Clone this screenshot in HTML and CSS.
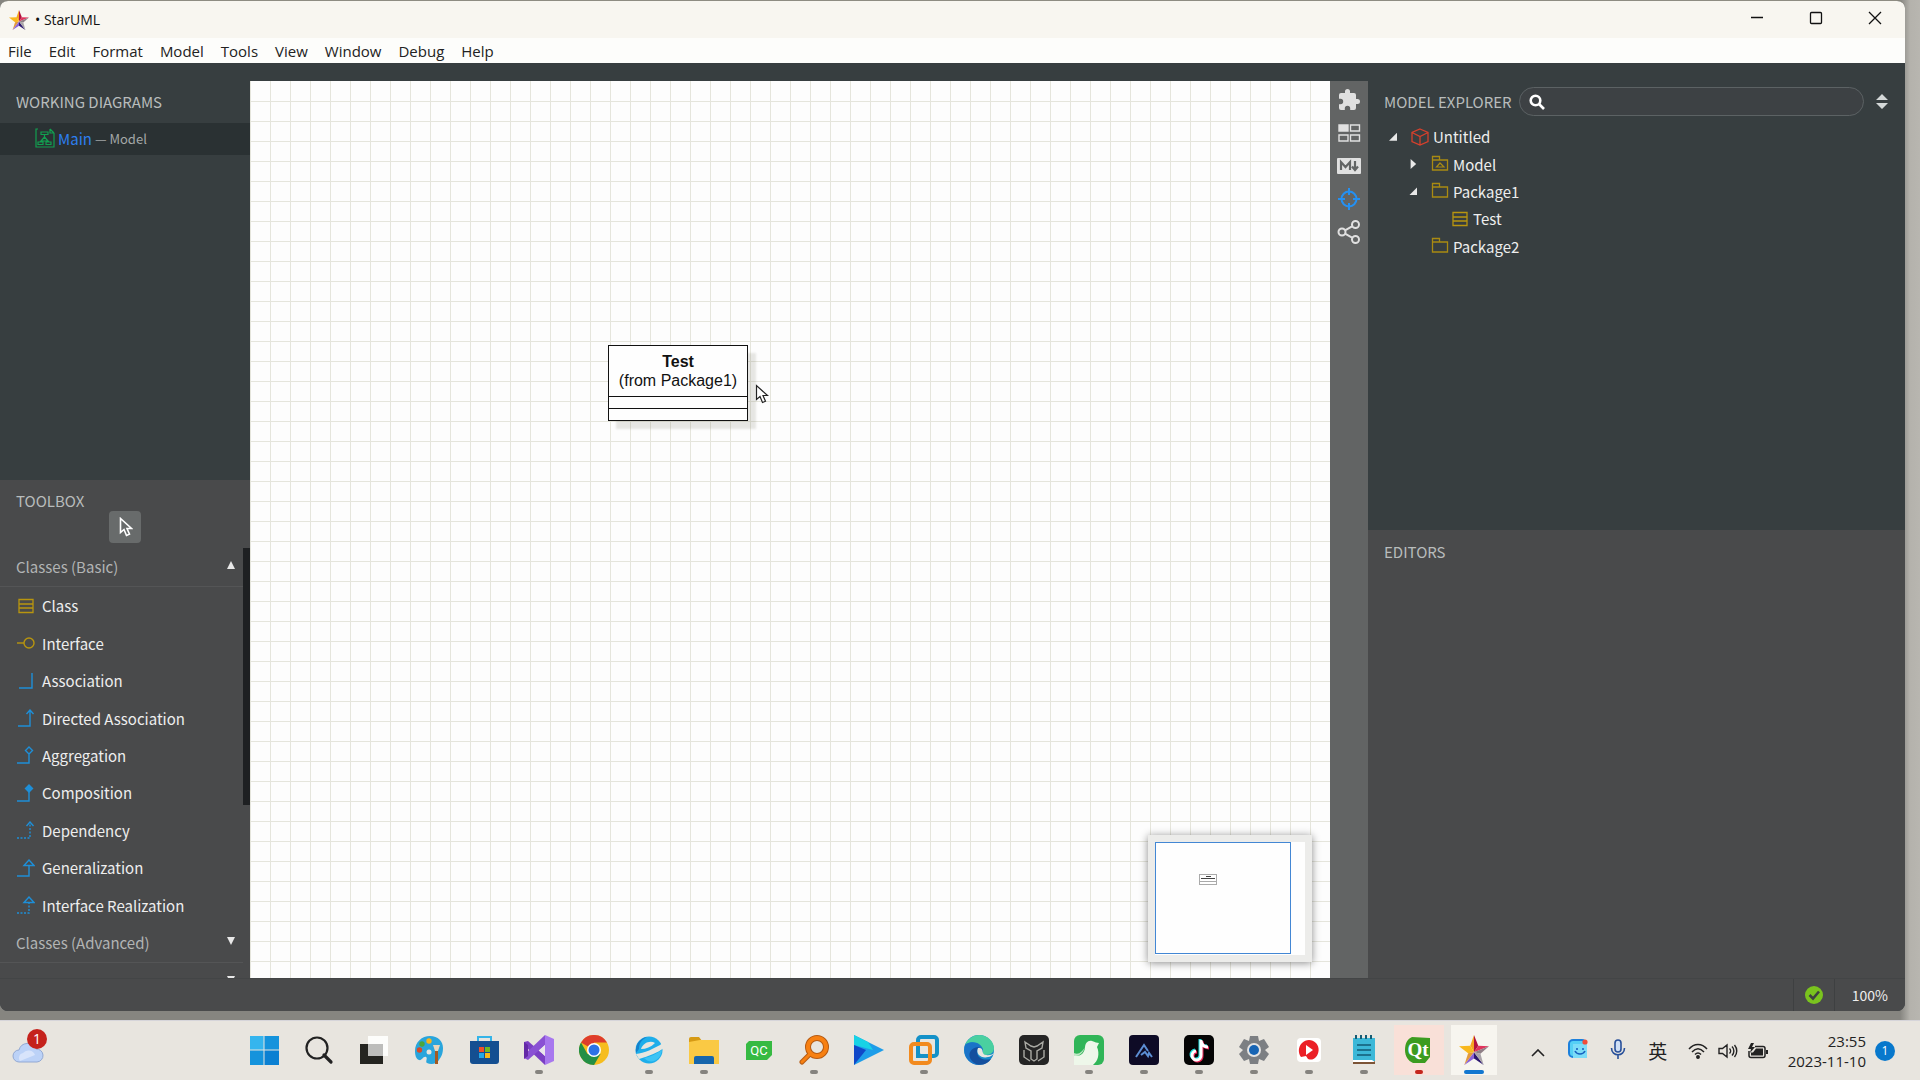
FILE: index.html
```html
<!DOCTYPE html>
<html lang="en">
<head>
    <meta charset="UTF-8">
    <meta name="viewport" content="width=device-width, initial-scale=1.0">
    <title>StarUML</title>
    <link rel="stylesheet" href="styles.css">
</head>
<body>
    <!-- shared icons -->
    <svg class="sprite" width="0" height="0" aria-hidden="true">
        <symbol id="star" viewBox="0 0 28 28">
            <path d="M14 0L10.500 10 14 16z" fill="#f5a623"/>
            <path d="M14 0L18 10 14 16z" fill="#b3123f"/>
            <path d="M0 10.500L10.500 10 14 16 8.500 17z" fill="#f9b81c"/>
            <path d="M28 10.500L18 10 14 16z" fill="#e0345c"/>
            <path d="M28 10.500L14 16 20 17.500z" fill="#8f7f86"/>
            <path d="M5 28L8.500 17 14 16z" fill="#e39a3c"/>
            <path d="M5 28L14 16V22z" fill="#8a62d8"/>
            <path d="M23 28L14 22V16z" fill="#2c1870"/>
            <path d="M23 28L14 16 20 17.500z" fill="#a9a3a8"/>
        </symbol>
        <symbol id="class" viewBox="0 0 18 18">
            <path d="M2 2.500h14v13H2zM2 7h14M2 11h14" fill="none" stroke="#b8950f" stroke-width="1.300"/>
        </symbol>
        <symbol id="folder" viewBox="0 0 18 18">
            <path d="M1.500 15V1.500h7V5h8v10zM1.500 5h7" fill="none" stroke="#a98a12" stroke-width="1.300"/>
        </symbol>
        <symbol id="pointer" viewBox="0 0 14 20">
            <path d="M1.500 1.500v14l3.500-3 2.500 6 3-1.300-2.500-5.700h4.500z"/>
        </symbol>
    </svg>

    <div class="window">
        <header class="titlebar">
            <svg class="logo" width="20" height="20"><use href="#star"/></svg>
            <span class="title">• StarUML</span>
            <div class="window-controls">
                <button aria-label="Minimize"><svg width="14" height="14" viewBox="0 0 14 14"><path d="M1 6.500h12"/></svg></button>
                <button aria-label="Maximize"><svg width="14" height="14" viewBox="0 0 14 14"><rect x="1.500" y="1.500" width="11" height="11" rx="1"/></svg></button>
                <button aria-label="Close"><svg width="14" height="14" viewBox="0 0 14 14"><path d="M1 1l12 12M13 1L1 13"/></svg></button>
            </div>
        </header>
        <nav class="menubar">
            <button>File</button>
            <button>Edit</button>
            <button>Format</button>
            <button>Model</button>
            <button>Tools</button>
            <button>View</button>
            <button>Window</button>
            <button>Debug</button>
            <button>Help</button>
        </nav>

        <main class="workspace">
            <aside class="sidebar">
                <section class="diagrams">
                    <h2>WORKING DIAGRAMS</h2>
                    <a class="diagram-item" href="#main">
                        <svg width="20" height="20" viewBox="0 0 20 20" fill="none" stroke="#12a050" stroke-width="1.200">
                            <path d="M3 1H1v18h18V5M15 1l4 4M15 1v4h4M6 4h7v2.500H6zM9.500 6.500V9M9.500 9L6 13h7zM3 14h5v2.500H3zM11 14h5v2.500h-5z"/>
                        </svg>
                        <span class="name">Main</span>
                        <span class="owner">— Model</span>
                    </a>
                </section>
                <section class="toolbox">
                    <h2>TOOLBOX</h2>
                    <button class="select-tool" aria-label="Select"><svg width="14" height="20" fill="none" stroke="#fff" stroke-width="1.600"><use href="#pointer"/></svg></button>
                    <div class="palette">
                        <button class="group">Classes (Basic)<span class="caret up"></span></button>
                        <ul class="tools">
                            <li><button><svg width="18" height="18"><use href="#class"/></svg>Class</button></li>
                            <li><button><svg width="18" height="18" viewBox="0 0 18 18" class="gold"><path d="M0 9h7"/><circle cx="12" cy="9" r="5"/></svg>Interface</button></li>
                            <li><button><svg width="18" height="18" viewBox="0 0 18 18" class="blue"><path d="M2 16h13V1"/></svg>Association</button></li>
                            <li><button><svg width="18" height="18" viewBox="0 0 18 18" class="blue"><path d="M1 17h12V1M9.500 5L13 1l3.500 4"/></svg>Directed Association</button></li>
                            <li><button><svg width="18" height="18" viewBox="0 0 18 18" class="blue"><path d="M0 17h12V8M12 1l3.500 3.500L12 8 8.500 4.500z"/></svg>Aggregation</button></li>
                            <li><button><svg width="18" height="18" viewBox="0 0 18 18" class="blue"><path d="M0 17h12V8"/><path d="M12 1l3.500 3.500L12 8 8.500 4.500z" fill="#1e8fd8"/></svg>Composition</button></li>
                            <li><button><svg width="18" height="18" viewBox="0 0 18 18" class="blue"><path d="M0 17h13V1" stroke-dasharray="2 1.500"/><path d="M9.500 5L13 1l3.500 4"/></svg>Dependency</button></li>
                            <li><button><svg width="18" height="18" viewBox="0 0 18 18" class="blue"><path d="M0 17h12V6M7 6.500L12 1l5 5.500z"/></svg>Generalization</button></li>
                            <li><button><svg width="18" height="18" viewBox="0 0 18 18" class="blue"><path d="M0 17h12V6" stroke-dasharray="2 1.500"/><path d="M7 6.500L12 1l5 5.500z"/></svg>Interface Realization</button></li>
                        </ul>
                        <button class="group">Classes (Advanced)<span class="caret down"></span></button>
                        <button class="group" aria-label="Expand"><span class="caret down"></span></button>
                    </div>
                </section>
            </aside>

            <section class="canvas">
                <div class="uml-class">
                    <div class="uml-name">
                        <strong>Test</strong>
                        <span>(from Package1)</span>
                    </div>
                    <div class="compartment"></div>
                    <div class="compartment"></div>
                </div>
                <svg class="cursor" width="14" height="20" fill="#fff" stroke="#222" stroke-width="1.200"><use href="#pointer"/></svg>
                <div class="minimap">
                    <div class="minimap-page">
                        <div class="minimap-view">
                            <svg class="minimap-node" width="18" height="11" viewBox="0 0 18 11"><rect x=".5" y=".5" width="17" height="10" fill="#fff" stroke="#aaa"/><path d="M7 2.500h5M2 4.500h14" stroke="#444"/><path d="M1 7.500h16" stroke="#aaa"/></svg>
                        </div>
                    </div>
                </div>
            </section>

            <nav class="toolbar">
                <button aria-label="Extensions"><svg width="24" height="24" viewBox="0 0 24 24" fill="#e0e0e0"><path d="M20.500 11H19V7a2 2 0 0 0-2-2h-4V3.500a2.500 2.500 0 0 0-5 0V5H4a2 2 0 0 0-2 2v3.800h1.500a2.700 2.700 0 0 1 0 5.400H2V20a2 2 0 0 0 2 2h3.800v-1.500a2.700 2.700 0 0 1 5.400 0V22H17a2 2 0 0 0 2-2v-4h1.500a2.500 2.500 0 0 0 0-5z"/></svg></button>
                <button aria-label="Layout"><svg width="24" height="24" viewBox="0 0 24 24" fill="none" stroke="#e0e0e0" stroke-width="1.400"><path d="M2 4h9v6H2z" fill="#e0e0e0"/><path d="M13.500 4h9v6h-9zM2 14h9v6H2zM13.500 14h9v6h-9z"/></svg></button>
                <button aria-label="Documentation"><svg width="24" height="24" viewBox="0 0 24 24"><rect y="4" width="24" height="16" rx="1" fill="#e0e0e0"/><path d="M4 16V8l4.500 5L13 8v8M18 7v7M15 12.500l3 3.500 3-3.500" fill="none" stroke="#626464" stroke-width="2.200"/></svg></button>
                <button aria-label="Minimap"><svg width="24" height="24" viewBox="0 0 24 24" fill="none" stroke="#2490f2" stroke-width="2"><circle cx="12" cy="12" r="7.500"/><path d="M12 1v7M12 16v7M1 12h7M16 12h7"/></svg></button>
                <button aria-label="Relationships"><svg width="24" height="24" viewBox="0 0 24 24" fill="none" stroke="#e0e0e0" stroke-width="2"><circle cx="5" cy="12" r="3.500"/><circle cx="18.500" cy="4.500" r="3.500"/><circle cx="18.500" cy="19.500" r="3.500"/><path d="M8 10.300l7.500-4.200M8 13.700l7.500 4.200"/></svg></button>
            </nav>

            <aside class="inspector">
                <section class="explorer">
                    <div class="explorer-head">
                        <h2>MODEL EXPLORER</h2>
                        <label class="search">
                            <svg width="16" height="16" viewBox="0 0 16 16" fill="none" stroke="#fff" stroke-width="2.600"><circle cx="6.500" cy="6.500" r="4.800"/><path d="M10 10l5 5"/></svg>
                            <input type="text" aria-label="Search model">
                        </label>
                        <button class="sort" aria-label="Sort"><svg width="12" height="16" viewBox="0 0 12 16" fill="#d4d8d8"><path d="M6 0l6 6H0zM6 15L0 9h12z"/></svg></button>
                    </div>
                    <ul class="tree">
                        <li class="level-0">
                            <span class="twist open"></span>
                            <svg width="18" height="18" viewBox="0 0 18 18" fill="none" stroke="#d6402c" stroke-width="1.300"><path d="M9 1l8 3.500v9L9 17l-8-3.500v-9zM1 4.500L9 8.500l8-4M9 8.500V17"/></svg>
                            Untitled
                        </li>
                        <li class="level-1">
                            <span class="twist closed"></span>
                            <svg width="18" height="18" viewBox="0 0 18 18"><use href="#folder"/><path d="M5.500 12L9 8l4 4z" fill="none" stroke="#a98a12" stroke-width="1.200"/></svg>
                            Model
                        </li>
                        <li class="level-1">
                            <span class="twist open"></span>
                            <svg width="18" height="18"><use href="#folder"/></svg>
                            Package1
                        </li>
                        <li class="level-2">
                            <span class="twist"></span>
                            <svg width="18" height="18"><use href="#class"/></svg>
                            Test
                        </li>
                        <li class="level-1">
                            <span class="twist"></span>
                            <svg width="18" height="18"><use href="#folder"/></svg>
                            Package2
                        </li>
                    </ul>
                </section>
                <section class="editors">
                    <h2>EDITORS</h2>
                </section>
            </aside>
        </main>

        <footer class="statusbar">
            <span class="status-ok"><svg width="18" height="18" viewBox="0 0 18 18"><circle cx="9" cy="9" r="9" fill="#7ac31e"/><path d="M4.500 9l3.500 3.500 6-7" fill="none" stroke="#3e4240" stroke-width="2.600"/></svg></span>
            <span class="zoom">100%</span>
        </footer>
    </div>

    <div class="taskbar">
        <button class="weather" aria-label="Weather">
            <svg width="32" height="22" viewBox="0 0 32 22"><path d="M7 21a6 6 0 0 1 0-12 9 9 0 0 1 17-1 6.500 6.500 0 0 1 1 13z" fill="#bcd2f7" stroke="#92a9d4"/><path d="M8 20a5 5 0 0 1 3-8 7 7 0 0 1 12 2" fill="#d8e4fb"/></svg>
            <span class="badge">1</span>
        </button>
        <div class="apps">
            <button aria-label="Start"><svg viewBox="0 0 30 30" fill="#1593dc"><path d="M1 1h13.500v13.500H1z" fill="#35b5ee"/><path d="M15.500 1H30v13.500H15.500zM1 15.500h13.500V30H1z"/><path d="M15.500 15.500H30V30H15.500z" fill="#0b80d2"/></svg></button>
            <button aria-label="Search"><svg viewBox="0 0 30 30" fill="none" stroke="#222"><circle cx="13" cy="13" r="10.500" stroke-width="2.200"/><path d="M20 20l7 7" stroke-width="3.200" stroke-linecap="round"/></svg></button>
            <button aria-label="Task view"><svg viewBox="0 0 30 30"><path d="M1 9h23v20H1z" fill="#242420"/><path d="M9 1h20v20H9z" fill="#fdfdfb"/><path d="M9 9h15v12H9z" fill="#bdbdbb"/></svg></button>
            <button aria-label="Paint"><svg viewBox="0 0 30 30"><path d="M16 1c8 0 13 5 13 12 0 6-2 9-4 12-2 4-8 5-12 3-2-1 1-5-1-6-3-1-4 4-7 3-3-1-4-5-4-9C1 7 8 1 16 1z" fill="#29a5dc"/><circle cx="15" cy="17" r="2.500" fill="#e8e6df"/><circle cx="15" cy="6" r="2.700" fill="#f8b51c"/><circle cx="8" cy="9" r="2.700" fill="#4aa63c"/><circle cx="5.500" cy="15" r="2.700" fill="#d84a28"/><path d="M21 15h3v14h-3z" fill="#a35a22"/><path d="M19 10h7l-2 6h-3z" fill="#e8d5bb"/></svg></button>
            <button aria-label="Store"><svg viewBox="0 0 30 30"><path d="M9 7V2h13v5" fill="none" stroke="#35b4e8" stroke-width="2"/><path d="M1 6h29v20a3 3 0 0 1-3 3H4a3 3 0 0 1-3-3z" fill="#144f91"/><path d="M10 12h5v5h-5z" fill="#f05028"/><path d="M16 12h5v5h-5z" fill="#70b820"/><path d="M10 18h5v5h-5z" fill="#20a8e8"/><path d="M16 18h5v5h-5z" fill="#f8b818"/></svg></button>
            <button class="running" aria-label="Visual Studio"><svg viewBox="0 0 30 30"><path d="M21 0l9 4v22l-9 4z" fill="#a878ee"/><path d="M0 7l4-1 17 15v9L0 10z" fill="#7b3fc4"/><path d="M0 23l4 2L21 10V0L0 20z" fill="#8a50d4"/><path d="M0 7v17l4-3V10z" fill="#6429a6"/><path d="M21 10v11l-6-5.500z" fill="#eae6ec"/></svg></button>
            <button aria-label="Chrome"><svg viewBox="0 0 30 30"><circle cx="15" cy="15" r="15" fill="#f6bd1e"/><path d="M15 15L2 7.500A15 15 0 0 1 28 7.500H15z" fill="#df3d2c"/><path d="M2 7.500A15 15 0 0 0 15 30l6.500-11L8.500 19z" fill="#238f45"/><circle cx="15" cy="15" r="7" fill="#fff"/><circle cx="15" cy="15" r="5.500" fill="#2c72e6"/></svg></button>
            <button class="running" aria-label="Browser"><svg viewBox="0 0 30 30"><circle cx="15" cy="15" r="13.500" fill="#1eaeea"/><path d="M2 19c8-1 18-5 27-11l1 5c-7 5-15 8-25 11z" fill="#e8e6df"/><path d="M7 14c5 0 10-2 14-6-5-3-12 0-14 6z" fill="#e8e6df"/><path d="M2 18C1 9 6 3 13 2 7 5 5 9 5 14z" fill="#1481cc"/><path d="M10 23c6-1 12-4 18-8-1 9-10 16-18 8z" fill="#3cc4f5"/></svg></button>
            <button class="running" aria-label="File Explorer"><svg viewBox="0 0 30 30"><path d="M0 4a2 2 0 0 1 2-2h8l3 4v3H0z" fill="#d69a14"/><path d="M0 7l11-2h19v24H0z" fill="#fac944"/><path d="M5 23a2 2 0 0 1 2-2h16a2 2 0 0 1 2 2v6H5z" fill="#1766ac"/></svg></button>
            <button aria-label="Qt Creator"><svg viewBox="0 0 30 30"><path d="M5 6h23v14l-5 5H2V9z" fill="#36ba42"/><text x="15" y="20" text-anchor="middle" font-size="13" font-family="Roboto, sans-serif" fill="#fff">QC</text></svg></button>
            <button class="running" aria-label="Everything"><svg viewBox="0 0 30 30" fill="none"><circle cx="18" cy="12" r="9" stroke="#b55a12" stroke-width="6"/><path d="M11 19l-8 8" stroke="#b55a12" stroke-width="5" stroke-linecap="round"/><circle cx="18" cy="12" r="9" stroke="#f78012" stroke-width="4"/><path d="M11 19l-8 8" stroke="#f78012" stroke-width="3" stroke-linecap="round"/></svg></button>
            <button aria-label="Video player"><svg viewBox="0 0 30 30"><path d="M0 0l30 15L0 30z" fill="#1e9de9"/><path d="M0 0l14 7 5 8-19-5z" fill="#18d2e5"/><path d="M0 10l12 5L0 30z" fill="#1047c8"/></svg></button>
            <button class="running" aria-label="VMware"><svg viewBox="0 0 30 30" fill="none" stroke-width="4"><rect x="9" y="2" width="19" height="19" rx="3" stroke="#1491c8"/><rect x="2" y="9" width="19" height="19" rx="3" stroke="#f28a1e"/><path d="M9 17v4h8" stroke="#1491c8"/></svg></button>
            <button aria-label="Edge"><svg viewBox="0 0 30 30"><circle cx="15" cy="15" r="15" fill="#168acb"/><path d="M1 10C4 3 10 0 15 0c9 0 15 7 15 13 0 4-3 7-8 7-3 0-4-1-3-3 1-8-12-13-18-7z" fill="#4ad0a0"/><path d="M1 10C7 4 20 8 19 17c-1-5-9-5-11 1-2 5 2 10 7 12C6 30-2 21 1 10z" fill="#1a73c8"/><path d="M15 12c-5 6 0 15 12 12-4 6-12 8-18 3-7-6-3-15 6-15z" fill="#144f9e"/><path d="M14 13c-3 7 5 12 13 8 1-1 2-1 3-3-3 3-10 3-11 0s0-5-5-5z" fill="#e8e6df"/></svg></button>
            <button aria-label="Control center"><svg viewBox="0 0 30 30"><rect width="30" height="30" rx="5" fill="#252525"/><path d="M6 7l6 4 3 1 3-1 6-4-1 6-5 3v8l-3 2-3-2v-8l-5-3zM5 15v7l6 4M25 15v7l-6 4" fill="none" stroke="#aaaaa4" stroke-width="1.400"/></svg></button>
            <button class="running" aria-label="Bird"><svg viewBox="0 0 30 30"><rect width="30" height="30" rx="6" fill="#30b558"/><path d="M0 30V19c5 4 10 0 11-6 0-5 3-8 7-7 3 1 5 2 7 2l-2 4c3 7 1 14-4 18z" fill="#eef7ea"/><path d="M11 12c-3 5-6 8-11 6v3c6 0 9-3 11-9z" fill="#c0e6c6"/></svg></button>
            <button class="running" aria-label="Editor"><svg viewBox="0 0 30 30"><rect width="30" height="30" rx="4" fill="#0e0b26"/><path d="M7 22l8-12 4 6M12 20l4-3 3 4 1-3 3 4" fill="none" stroke="#5c8ed4" stroke-width="2"/></svg></button>
            <button class="running" aria-label="Douyin"><svg viewBox="0 0 30 30" fill="none" stroke-width="3"><rect width="30" height="30" rx="5" fill="#050505"/><path d="M16 4v15a4.500 4.500 0 1 1-5-4M16 5c1 4 4 6 7 6" stroke="#25e0df"/><path d="M18 6v15a4.500 4.500 0 1 1-5-4M18 7c1 4 4 6 7 6" stroke="#ed2858"/><path d="M17 5v15a4.500 4.500 0 1 1-5-4M17 6c1 4 4 6 7 6" stroke="#fff"/></svg></button>
            <button class="running" aria-label="Settings"><svg viewBox="0 0 30 30"><path d="M11 1h8l1 5 5-2 5 8-4 3 4 4-5 7-5-2-1 5h-8l-1-5-5 2-5-7 4-4-4-3 5-8 5 2z" fill="#7c7f83"/><circle cx="15" cy="15" r="7" fill="#e4e4e4"/><circle cx="15" cy="15" r="5" fill="#1664b4"/></svg></button>
            <button class="running" aria-label="Recorder"><svg viewBox="0 0 30 30"><rect x="3" y="3" width="24" height="24" rx="4" fill="#fff"/><path d="M7 22c-3-4-3-10 1-14s10-4 14 0 3 11 0 14-5 3-8 2l-2-3z" fill="#eb2026"/><path d="M12 10l7 5-7 5z" fill="#fff"/></svg></button>
            <button class="running" aria-label="Notepad"><svg viewBox="0 0 30 30"><path d="M4 3h22v26H4z" fill="#3cb8d8"/><path d="M4 26h22v3H4z" fill="#7c5436"/><path d="M4 25h19l3 2H4z" fill="#fff"/><path d="M8 10h14M8 15h14M8 20h14" stroke="#125b76" stroke-width="1.600"/><path d="M7 0v4M12 0v4M17 0v4M22 0v4" stroke="#155c74" stroke-width="2"/></svg></button>
            <button class="running alert" aria-label="Qt"><svg viewBox="0 0 30 30"><path d="M8 2l18 1v19l-5 6H9c-5-2-8-7-8-13S3 4 8 2z" fill="#3c9c20"/><text x="14" y="21" text-anchor="middle" font-size="19" font-weight="bold" font-family="Liberation Serif, serif" fill="#fff">Qt</text></svg></button>
            <button class="running active" aria-label="StarUML"><svg><use href="#star"/></svg></button>
        </div>
        <div class="tray">
            <button aria-label="Show hidden icons"><svg width="14" height="8" viewBox="0 0 14 8" fill="none" stroke="#222" stroke-width="1.600"><path d="M1 7l6-6 6 6"/></svg></button>
            <button aria-label="Assistant"><svg width="20" height="20" viewBox="0 0 20 20"><rect x="1" y="1" width="17" height="17" rx="4" fill="#55d0f5" stroke="#1c80dc" stroke-width="2"/><path d="M5 5h14v14H5z" fill="#7cdcf8"/><path d="M9 9v2M15 9v2M7 12c2 4 8 4 10 0" fill="none" stroke="#1762c0" stroke-width="1.600"/><circle cx="17" cy="3" r="2.600" fill="#f04c38"/></svg></button>
            <button aria-label="Microphone"><svg width="16" height="20" viewBox="0 0 16 20" fill="none" stroke="#28509a" stroke-width="1.600"><rect x="5" y="1" width="6" height="12" rx="3" fill="#cfdff5"/><path d="M1.500 9c0 9 13 9 13 0M8 16v4"/></svg></button>
            <button class="ime">英</button>
            <div class="system">
                <svg width="20" height="16" viewBox="0 0 20 16" fill="none" stroke="#222" stroke-width="1.500"><path d="M1 6c5-6 13-6 18 0M4 9c4-4.500 8-4.500 12 0M7 11.500c2-2 4-2 6 0"/><circle cx="10" cy="14" r="1.200" fill="#222"/></svg>
                <svg width="20" height="16" viewBox="0 0 20 16" fill="none" stroke="#222" stroke-width="1.400"><path d="M1 5.500h3.500L9 2v12l-4.500-3.500H1zM11.500 5.500c1.500 1.500 1.500 3.500 0 5M14 3.500c2.500 2.500 2.500 6.500 0 9M16.500 2c3 3.500 3 8.500 0 12"/></svg>
                <svg width="20" height="16" viewBox="0 0 20 16"><path d="M7 3.500h8a2 2 0 0 1 2 2v7a2 2 0 0 1-2 2H3a2 2 0 0 1-2-2V8" fill="none" stroke="#222" stroke-width="1.500"/><path d="M8 5.500h7v7H3V9.500h2zM18 7h2v4h-2zM3 0L0 6h3L2 10l5-6H4l2-4z" fill="#222"/></svg>
            </div>
            <div class="clock">
                <span>23:55</span>
                <span>2023-11-10</span>
            </div>
            <span class="notifications">1</span>
        </div>
    </div>
</body>
</html>
```
FILE: styles.css
```css
* {
    box-sizing: border-box;
}
body {
    margin: 0;
    height: 100vh;
    display: flex;
    flex-direction: column;
    overflow: hidden;
    background: linear-gradient(to right, #868580 0, #868580 calc(100% - 20px), #b4b2ac calc(100% - 10px), #b8b6b0 100%);
    font-family: "Noto Sans CJK SC", sans-serif;
    font-size: 15px;
    color: #eeeeee;
}
button {
    margin: 0;
    padding: 0;
    border: none;
    background: none;
    font: inherit;
    color: inherit;
}
svg {
    flex-shrink: 0;
}
h2 {
    margin: 0;
    font-size: 15px;
    font-weight: normal;
    line-height: 20px;
    color: #b8bcbc;
}
ul {
    margin: 0;
    padding: 0;
    list-style: none;
}
.sprite {
    position: absolute;
}

/* application window */
.window {
    flex: 1;
    min-height: 0;
    margin: 0 15px 9px 0;
    display: flex;
    flex-direction: column;
    border-top: 1px solid #8e8c82;
    border-radius: 8px;
    overflow: hidden;
    background-color: #373e40;
}
.titlebar {
    height: 37px;
    flex-shrink: 0;
    display: flex;
    align-items: center;
    padding-left: 9px;
    background-color: #f8f6f0;
    color: #111;
    font-family: "Open Sans", sans-serif;
    font-size: 14px;
}
.title {
    margin-left: 6px;
}
.window-controls {
    margin-left: auto;
    display: flex;
    padding-right: 1px;
}
.window-controls button {
    width: 59px;
    height: 37px;
}
.window-controls svg {
    fill: none;
    stroke: #111;
    stroke-width: 1.3;
}
.menubar {
    height: 25px;
    flex-shrink: 0;
    display: flex;
    gap: 1px;
    background-color: #fdfdfb;
    color: #222;
    font-family: "Open Sans", sans-serif;
    font-size: 15px;
    line-height: 26px;
}
.menubar button {
    padding: 0 8px;
}
.workspace {
    flex: 1;
    min-height: 0;
    display: flex;
    padding-top: 18px;
}

/* left side */
.sidebar {
    width: 250px;
    flex-shrink: 0;
    display: flex;
    flex-direction: column;
}
.diagrams {
    flex: 1;
    min-height: 0;
    padding-top: 11px;
}
.diagrams h2,
.toolbox h2 {
    padding-left: 16px;
}
.diagram-item {
    height: 32px;
    margin-top: 11px;
    padding: 0 0 2px 35px;
    display: flex;
    align-items: center;
    background-color: #2a3133;
    text-decoration: none;
}
.diagram-item .name {
    margin-left: 3px;
    color: #2d7ff0;
}
.diagram-item .owner {
    margin-left: 3px;
    font-size: 13px;
    color: #a4a8a8;
}
.toolbox {
    height: 498px;
    flex-shrink: 0;
    display: flex;
    flex-direction: column;
    padding-top: 11px;
    background-color: #494a4b;
}
.select-tool {
    width: 32px;
    height: 32px;
    align-self: center;
    display: flex;
    align-items: center;
    justify-content: center;
    padding-left: 2px;
    border-radius: 4px;
    background-color: #686b6b;
}
.palette {
    flex: 1;
    min-height: 0;
    margin-top: 5px;
    overflow: hidden;
    background: linear-gradient(#1e2022, #1e2022) right top / 7px 257px no-repeat;
}
.group {
    width: 243px;
    height: 39px;
    display: flex;
    justify-content: space-between;
    padding: 0 8px 0 16px;
    border-bottom: 1px solid #545556;
    line-height: 38px;
    color: #b2b4b4;
}
.caret {
    width: 8px;
    height: 8px;
    margin: 13px 0 0 auto;
    background-color: #e8e8e8;
}
.caret.up {
    clip-path: polygon(50% 0, 100% 100%, 0 100%);
}
.caret.down {
    clip-path: polygon(0 0, 100% 0, 50% 100%);
}
.tools {
    height: 337px;
    display: grid;
    grid-auto-rows: 1fr;
}
.tools button {
    width: 243px;
    height: 100%;
    display: flex;
    align-items: center;
    gap: 7px;
    padding-left: 17px;
}
.gold,
.blue {
    fill: none;
    stroke: #b8950f;
    stroke-width: 1.4;
}
.blue {
    stroke: #1e8fd8;
}

/* diagram */
.canvas {
    flex: 1;
    min-width: 0;
    position: relative;
    background-color: #fdfdfd;
    background-image:
        repeating-linear-gradient(to right, transparent 0, transparent 19px, #e5e5dc 19px, #e5e5dc 20px),
        repeating-linear-gradient(to bottom, transparent 0, transparent 19px, #e5e5dc 19px, #e5e5dc 20px);
    background-position: 1px 1px;
}
.uml-class {
    position: absolute;
    left: 358px;
    top: 264px;
    width: 140px;
    border: 1px solid #111;
    background-color: #fefefe;
    box-shadow: 8px 8px 2px rgba(90, 90, 70, 0.14);
    color: #111;
    font-family: "Liberation Sans", Arial, sans-serif;
    font-size: 16px;
    line-height: 19px;
}
.uml-name {
    display: flex;
    flex-direction: column;
    align-items: center;
    padding: 6px 0;
}
.compartment {
    height: 12px;
    border-top: 1px solid #111;
}
.cursor {
    position: absolute;
    left: 505px;
    top: 303px;
}
.minimap {
    position: absolute;
    right: 18px;
    bottom: 16px;
    width: 164px;
    height: 127px;
    padding: 7px;
    background-color: #ececea;
    box-shadow: 0 1px 8px rgba(0, 0, 0, 0.45);
}
.minimap-page {
    height: 113px;
    background-color: #fefefe;
}
.minimap-view {
    width: 136px;
    height: 112px;
    padding: 31px 0 0 43px;
    border: 1px solid #4387d4;
}
.minimap-node {
    display: block;
}

/* vertical toolbar */
.toolbar {
    width: 38px;
    flex-shrink: 0;
    display: flex;
    flex-direction: column;
    align-items: center;
    gap: 9px;
    padding-top: 7px;
    background-color: #626464;
}
.toolbar button {
    height: 24px;
}
.toolbar svg {
    display: block;
}

/* right side */
.inspector {
    width: 537px;
    flex-shrink: 0;
    display: flex;
    flex-direction: column;
}
.explorer {
    height: 449px;
    flex-shrink: 0;
}
.explorer-head {
    display: flex;
    align-items: center;
    gap: 7px;
    padding: 6px 17px 0 16px;
}
.search {
    flex: 1;
    height: 29px;
    display: flex;
    align-items: center;
    padding: 0 9px;
    border: 1px solid #5c6264;
    border-radius: 15px;
    background-color: #3d4144;
}
.search input {
    flex: 1;
    min-width: 0;
    margin-left: 8px;
    border: none;
    outline: none;
    background: none;
    font: inherit;
    color: inherit;
}
.sort {
    margin-left: 5px;
    display: flex;
}
.tree {
    height: 137px;
    margin-top: 7px;
    display: grid;
    grid-auto-rows: 1fr;
}
.tree li {
    display: flex;
    align-items: center;
    gap: 4px;
}
.level-0 {
    padding-left: 21px;
}
.level-1 {
    padding-left: 41px;
}
.level-2 {
    padding-left: 61px;
}
.twist {
    width: 8px;
    height: 8px;
    margin-right: 10px;
}
.twist.open {
    background-color: #e8e8e8;
    clip-path: polygon(100% 0, 100% 100%, 0 100%);
}
.twist.closed {
    height: 10px;
    background-color: #e8e8e8;
    clip-path: polygon(20% 0, 90% 50%, 20% 100%);
}
.editors {
    flex: 1;
    padding: 12px 16px;
    background-color: #494a4b;
}
.statusbar {
    height: 33px;
    flex-shrink: 0;
    display: flex;
    justify-content: flex-end;
    align-items: center;
    background-color: #494a4b;
    border-top: 1px solid #434546;
    font-size: 14px;
}
.status-ok {
    height: 32px;
    display: flex;
    align-items: center;
    padding: 0 11px;
    border-left: 1px solid #3e4041;
    border-right: 1px solid #3e4041;
}
.zoom {
    margin: 0 17px;
}

/* windows taskbar */
.taskbar {
    height: 60px;
    flex-shrink: 0;
    display: flex;
    border-top: 1px solid #d6d5da;
    background-color: #e8e5df;
    color: #222;
    font-family: "Open Sans", sans-serif;
}
.weather {
    position: relative;
    height: 40px;
    margin: 8px 10% 0 12px;
    padding-top: 10px;
}
.badge {
    position: absolute;
    left: 15px;
    top: 0;
    width: 20px;
    height: 20px;
    border-radius: 50%;
    background-color: #c5221c;
    color: #fff;
    font-size: 14px;
    line-height: 20px;
}
.apps {
    display: flex;
}
.apps button {
    width: 55px;
    display: flex;
    flex-direction: column;
    align-items: center;
    padding-top: 14px;
}
.apps svg {
    width: 30px;
    height: 30px;
}
.running::after {
    content: "";
    width: 8px;
    height: 4px;
    margin-top: 5px;
    border-radius: 2px;
    background-color: #85837f;
}
.running.alert {
    background: linear-gradient(#f9e0d8, #f9e0d8) center 4px / 50px 50px no-repeat;
}
.running.alert::after {
    background-color: #c4261d;
}
.running.active {
    background: linear-gradient(#f7f5ef, #f7f5ef) center 4px / 46px 50px no-repeat;
}
.running.active::after {
    width: 20px;
    background-color: #1277d0;
}
.tray {
    display: flex;
    align-items: center;
    margin-left: auto;
    padding-right: 25px;
}
.tray > button {
    width: 40px;
}
.ime {
    font-family: "Noto Sans CJK SC", sans-serif;
    font-size: 19px;
}
.system {
    display: flex;
    gap: 10px;
    margin: 0 20px 0 10px;
}
.clock {
    display: flex;
    flex-direction: column;
    align-items: flex-end;
    font-size: 15px;
    line-height: 20px;
}
.notifications {
    width: 20px;
    height: 20px;
    margin-left: 9px;
    border-radius: 50%;
    background-color: #0878cc;
    color: #fff;
    font-size: 12px;
    line-height: 20px;
    text-align: center;
}
```
